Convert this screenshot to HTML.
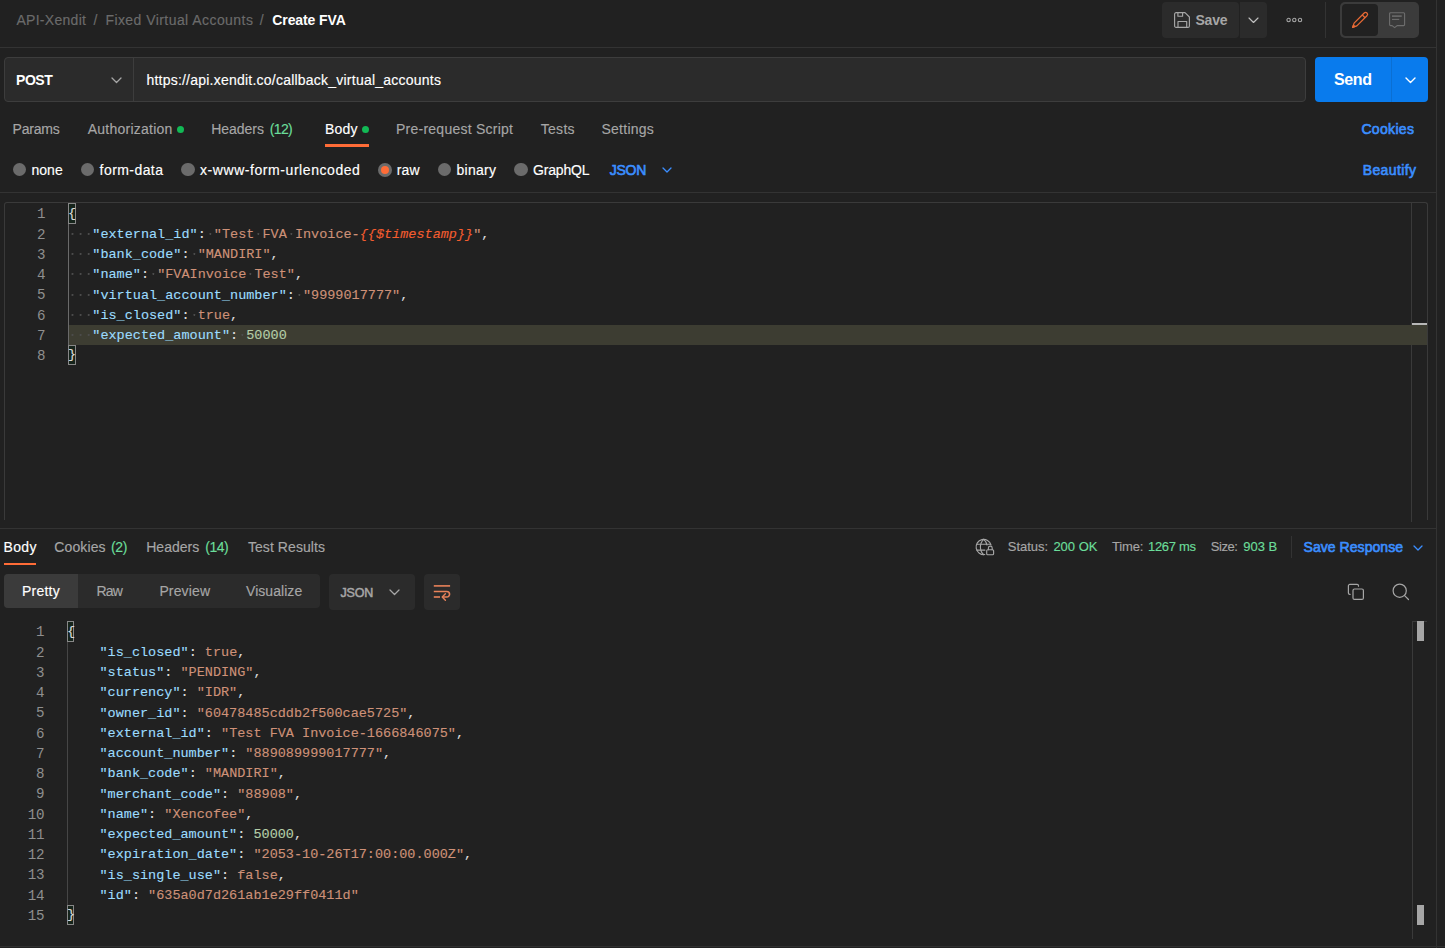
<!DOCTYPE html>
<html lang="en"><head><meta charset="utf-8"><title>Create FVA - Postman</title>
<style>
html,body{margin:0;padding:0;background:#212121;}
body{width:1445px;height:948px;position:relative;overflow:hidden;font-family:"Liberation Sans",sans-serif;}
.a{position:absolute;}
.t{position:absolute;white-space:pre;line-height:20px;height:20px;}
.ln{position:absolute;background:#333333;}
.code{position:absolute;white-space:pre;font-family:"Liberation Mono",monospace;font-size:13.5px;line-height:20.25px;height:20.25px;color:#dcdcdc;letter-spacing:0px;-webkit-text-stroke:0.12px currentColor;}
.code i{font-style:normal;}
.num{position:absolute;white-space:pre;font-family:"Liberation Mono",monospace;font-size:14.2px;line-height:20.25px;height:20.25px;color:#8f8f8f;text-align:right;width:40px;letter-spacing:-0.42px;}
i.k{color:#9cdcfe;} i.s{color:#ce9178;} i.n{color:#b5cea8;} i.b{color:#ce9178;} i.p{color:#dcdcdc;}
i.br{position:relative;top:-1px;}
i.v{color:#f45d2f;font-style:italic !important;} i.w{background:radial-gradient(circle at 4.4px 6.9px,#4c4c4c 0.7px,rgba(76,76,76,0) 1.3px) 0 0/8.1px 100% repeat-x;}
.radio{position:absolute;width:13.5px;height:13.5px;border-radius:50%;background:#6b6b6b;}
svg{position:absolute;overflow:visible;}
</style></head>
<body>
<div id="frame">
<div class="ln" style="left:0;top:47px;width:1436px;height:1px"></div>
<div class="ln" style="left:1436px;top:0;width:1px;height:948px"></div>
<div class="ln" style="left:0;top:192px;width:1436px;height:1px"></div>
<div class="ln" style="left:0;top:528px;width:1436px;height:1px"></div>
<div class="ln" style="left:0;top:946px;width:1445px;height:1px;background:#303030"></div>
</div>
<header id="header" aria-label="Request breadcrumb and actions">
<div class="a" style="left:1162px;top:2px;width:77px;height:36px;background:#2b2b2b;border-radius:4px"></div>
<div class="a" style="left:1240px;top:2px;width:27px;height:36px;background:#2b2b2b;border-radius:0 4px 4px 0"></div>
<svg style="left:1174px;top:12px" width="16" height="16" viewBox="0 0 16 16" fill="none" stroke="#a6a6a6" stroke-width="1.15" stroke-linejoin="round"><path d="M0.6 2.1a1.5 1.5 0 0 1 1.5-1.5h8.9l4.4 4.4v8.9a1.5 1.5 0 0 1-1.5 1.5H2.1a1.5 1.5 0 0 1-1.5-1.5z"/><path d="M3.9 0.6v3.6h4.7V0.6"/><path d="M4 15.4V9.5h8.7v5.9"/></svg>
<svg style="left:1248px;top:17px" width="11" height="7" viewBox="0 0 11 7" fill="none" stroke="#c0c0c0" stroke-width="1.15" stroke-linecap="round" stroke-linejoin="round"><path d="M1 1l4.5 4.5L10 1"/></svg>
<svg style="left:1286px;top:17px" width="17" height="6" viewBox="0 0 17 6" fill="none" stroke="#a6a6a6" stroke-width="1.1"><circle cx="2.6" cy="3" r="1.7"/><circle cx="8.3" cy="3" r="1.7"/><circle cx="14" cy="3" r="1.7"/></svg>
<div class="ln" style="left:1325px;top:2px;width:1px;height:36px"></div>
<div class="a" style="left:1340px;top:2px;width:79px;height:36px;background:#3b3b3b;border-radius:5px"></div>
<div class="a" style="left:1342px;top:4px;width:36px;height:32px;background:#212121;border-radius:4px"></div>
<svg style="left:1360.1px;top:19.8px" width="1" height="1" viewBox="0 0 1 1" fill="none" stroke="#e86a35" stroke-width="1.25" stroke-linejoin="round" stroke-linecap="round"><g transform="rotate(45)"><path d="M-1.95 -7.9a1.95 1.95 0 0 1 3.9 0V6.4L0 10.4L-1.95 6.4z"/><path d="M-1.95 -5.2h3.9" stroke-linecap="butt"/><path d="M-1 8.2L0 10.4L1 8.2z" fill="#e86a35"/></g></svg>
<svg style="left:1388.7px;top:12px" width="17" height="17" viewBox="0 0 17 17" fill="none" stroke="#6e6e6e" stroke-width="1.1" stroke-linejoin="round" stroke-linecap="butt"><path d="M1.6 0.7h13a1 1 0 0 1 1 1v10.9a1 1 0 0 1-1 1H8.1L5.6 15.6 3.1 13.6H1.6a1 1 0 0 1-1-1V1.7a1 1 0 0 1 1-1z"/><path d="M3 4.1h9.7" stroke-width="1.5"/><path d="M3 7.4h7.2"/></svg>
<div class="t" style="left:16.4px;top:10.15px;font-size:14px;color:#6b6b6b;-webkit-text-stroke:0.15px;letter-spacing:0.296px;">API-Xendit</div>
<div class="t" style="left:93.6px;top:10.15px;font-size:14px;color:#6b6b6b;-webkit-text-stroke:0.15px;">/</div>
<div class="t" style="left:105.4px;top:10.15px;font-size:14px;color:#6b6b6b;-webkit-text-stroke:0.15px;letter-spacing:0.44px;">Fixed Virtual Accounts</div>
<div class="t" style="left:259.8px;top:10.15px;font-size:14px;color:#6b6b6b;-webkit-text-stroke:0.15px;">/</div>
<div class="t" style="left:272.3px;top:10.15px;font-size:14px;color:#ffffff;font-weight:700;letter-spacing:-0.104px;">Create FVA</div>
<div class="t" style="left:1195.5px;top:10.15px;font-size:14px;color:#a6a6a6;font-weight:700;letter-spacing:-0.234px;">Save</div>
</header>
<section id="url-bar" aria-label="Request URL bar">
<div class="a" style="left:4px;top:57px;width:1300px;height:43px;background:#2b2b2b;border:1px solid #3d3d3d;border-radius:4px"></div>
<div class="a" style="left:133px;top:58px;width:1px;height:43px;background:#3d3d3d"></div>
<svg style="left:111px;top:77px" width="11" height="7" viewBox="0 0 11 7" fill="none" stroke="#a6a6a6" stroke-width="1.3" stroke-linecap="round" stroke-linejoin="round"><path d="M1 1l4.5 4.5L10 1"/></svg>
<div class="a" style="left:1315px;top:57px;width:113px;height:45px;background:#097bed;border-radius:4px"></div>
<div class="a" style="left:1391px;top:57px;width:1px;height:45px;background:#0a6fd3"></div>
<svg style="left:1405px;top:77px" width="11" height="7" viewBox="0 0 11 7" fill="none" stroke="#ffffff" stroke-width="1.4" stroke-linecap="round" stroke-linejoin="round"><path d="M1 1l4.5 4.5L10 1"/></svg>
<div class="t" style="left:16.1px;top:70.15px;font-size:14px;color:#ffffff;font-weight:700;letter-spacing:-0.475px;">POST</div>
<div class="t" style="left:146.4px;top:70.15px;font-size:14px;color:#ffffff;-webkit-text-stroke:0.15px;letter-spacing:0.227px;">https://api.xendit.co/callback_virtual_accounts</div>
<div class="t" style="left:1333.9px;top:69.96px;font-size:16px;color:#ffffff;font-weight:700;letter-spacing:-0.308px;">Send</div>
</section>
<nav id="request-tabs" aria-label="Request tabs">
<div class="a" style="left:177px;top:126px;width:7px;height:7px;border-radius:50%;background:#12b955"></div>
<div class="a" style="left:362px;top:126px;width:7px;height:7px;border-radius:50%;background:#12b955"></div>
<div class="a" style="left:325px;top:144.4px;width:44px;height:2.25px;background:#ff6c37"></div>
<div class="t" style="left:12.5px;top:119.15px;font-size:14px;color:#a6a6a6;-webkit-text-stroke:0.15px;letter-spacing:-0.187px;">Params</div>
<div class="t" style="left:87.7px;top:119.15px;font-size:14px;color:#a6a6a6;-webkit-text-stroke:0.15px;letter-spacing:0.248px;">Authorization</div>
<div class="t" style="left:211.3px;top:119.15px;font-size:14px;color:#a6a6a6;-webkit-text-stroke:0.15px;letter-spacing:-0.037px;">Headers</div>
<div class="t" style="left:269.8px;top:119.15px;font-size:14px;color:#6bdd9a;-webkit-text-stroke:0.15px;letter-spacing:-0.669px;">(12)</div>
<div class="t" style="left:325.0px;top:119.15px;font-size:14px;color:#ffffff;-webkit-text-stroke:0.15px;letter-spacing:0.159px;">Body</div>
<div class="t" style="left:396.0px;top:119.15px;font-size:14px;color:#a6a6a6;-webkit-text-stroke:0.15px;letter-spacing:0.245px;">Pre-request Script</div>
<div class="t" style="left:540.7px;top:119.15px;font-size:14px;color:#a6a6a6;-webkit-text-stroke:0.15px;letter-spacing:0.303px;">Tests</div>
<div class="t" style="left:601.5px;top:119.15px;font-size:14px;color:#a6a6a6;-webkit-text-stroke:0.15px;letter-spacing:0.244px;">Settings</div>
<div class="t" style="left:1361.4px;top:119.15px;font-size:14px;color:#3b8eff;-webkit-text-stroke:0.65px;letter-spacing:0.334px;">Cookies</div>
</nav>
<section id="body-type" aria-label="Body type selector">
<div class="radio" style="left:12.8px;top:162.6px"></div>
<div class="radio" style="left:80.8px;top:162.6px"></div>
<div class="radio" style="left:181.2px;top:162.6px"></div>
<div class="radio" style="left:437.8px;top:162.6px"></div>
<div class="radio" style="left:514.2px;top:162.6px"></div>
<div class="radio" style="left:377.85px;top:162.85px;width:14.3px;height:14.3px;background:#6b6b6b"></div>
<div class="a" style="left:380.7px;top:165.7px;width:8.6px;height:8.6px;border-radius:50%;background:#ff6c37"></div>
<svg style="left:662px;top:167px" width="10" height="6" viewBox="0 0 10 6" fill="none" stroke="#3b8eff" stroke-width="1.3" stroke-linecap="round" stroke-linejoin="round"><path d="M1 1l4 4 4-4"/></svg>
<div class="t" style="left:31.4px;top:160.15px;font-size:14px;color:#ffffff;-webkit-text-stroke:0.15px;letter-spacing:0.081px;">none</div>
<div class="t" style="left:99.6px;top:160.15px;font-size:14px;color:#ffffff;-webkit-text-stroke:0.15px;letter-spacing:0.435px;">form-data</div>
<div class="t" style="left:200.0px;top:160.15px;font-size:14px;color:#ffffff;-webkit-text-stroke:0.15px;letter-spacing:0.565px;">x-www-form-urlencoded</div>
<div class="t" style="left:396.7px;top:160.15px;font-size:14px;color:#ffffff;-webkit-text-stroke:0.15px;letter-spacing:0.219px;">raw</div>
<div class="t" style="left:456.5px;top:160.15px;font-size:14px;color:#ffffff;-webkit-text-stroke:0.15px;letter-spacing:0.272px;">binary</div>
<div class="t" style="left:533.0px;top:160.15px;font-size:14px;color:#ffffff;-webkit-text-stroke:0.15px;letter-spacing:-0.166px;">GraphQL</div>
<div class="t" style="left:609.7px;top:160.15px;font-size:14px;color:#3b8eff;-webkit-text-stroke:0.65px;letter-spacing:-0.215px;">JSON</div>
<div class="t" style="left:1362.7px;top:160.15px;font-size:14px;color:#3b8eff;-webkit-text-stroke:0.65px;letter-spacing:0.401px;">Beautify</div>
</section>
<section id="request-editor" aria-label="Request body editor">
<div class="a" style="left:4px;top:202px;width:1422px;height:330px;border:1px solid #3a3a3a;border-bottom:none;border-radius:3px 3px 0 0;clip-path:inset(0 0 13px 0)"></div>
<div class="a" style="left:1411px;top:203px;width:1px;height:319px;background:#3a3a3a"></div>
<div class="a" style="left:68px;top:325px;width:1359px;height:20px;background:#3d3d32"></div>
<div class="a" style="left:1412px;top:323px;width:15px;height:2px;background:#b8b8b8"></div>
<div class="a" style="left:68px;top:203px;width:1px;height:162px;background:#6a6a6a"></div>
<div class="a" style="left:68px;top:203.4px;width:8px;height:20.3px;border:1px solid #888;background:#16241b;box-sizing:border-box"></div>
<div class="a" style="left:68px;top:345.2px;width:8px;height:20px;border:1px solid #888;background:#16241b;box-sizing:border-box"></div>
<div class="num" style="left:5px;top:204.48px">1</div>
<div class="code" style="left:68.0px;top:204.68px"><i class="p br">{</i></div>
<div class="num" style="left:5px;top:224.73px">2</div>
<div class="code" style="left:68.0px;top:224.93px"><i class="w">   </i><i class="k">"external_id"</i><i class="p">:</i><i class="w"> </i><i class="s">"Test</i><i class="w"> </i><i class="s">FVA</i><i class="w"> </i><i class="s">Invoice-</i><i class="v">{{$timestamp}}</i><i class="s">"</i><i class="p">,</i></div>
<div class="num" style="left:5px;top:244.98px">3</div>
<div class="code" style="left:68.0px;top:245.18px"><i class="w">   </i><i class="k">"bank_code"</i><i class="p">:</i><i class="w"> </i><i class="s">"MANDIRI"</i><i class="p">,</i></div>
<div class="num" style="left:5px;top:265.23px">4</div>
<div class="code" style="left:68.0px;top:265.43px"><i class="w">   </i><i class="k">"name"</i><i class="p">:</i><i class="w"> </i><i class="s">"FVAInvoice</i><i class="w"> </i><i class="s">Test"</i><i class="p">,</i></div>
<div class="num" style="left:5px;top:285.48px">5</div>
<div class="code" style="left:68.0px;top:285.68px"><i class="w">   </i><i class="k">"virtual_account_number"</i><i class="p">:</i><i class="w"> </i><i class="s">"9999017777"</i><i class="p">,</i></div>
<div class="num" style="left:5px;top:305.73px">6</div>
<div class="code" style="left:68.0px;top:305.93px"><i class="w">   </i><i class="k">"is_closed"</i><i class="p">:</i><i class="w"> </i><i class="b">true</i><i class="p">,</i></div>
<div class="num" style="left:5px;top:325.98px">7</div>
<div class="code" style="left:68.0px;top:326.18px"><i class="w">   </i><i class="k">"expected_amount"</i><i class="p">:</i><i class="w"> </i><i class="n">50000</i></div>
<div class="num" style="left:5px;top:346.23px">8</div>
<div class="code" style="left:68.0px;top:346.43px"><i class="p br">}</i></div>
</section>
<nav id="response-tabs" aria-label="Response tabs and status">
<div class="a" style="left:4px;top:563px;width:32px;height:2px;background:#ff6c37"></div>
<svg style="left:975px;top:538px" width="20" height="18" viewBox="0 0 20 18" fill="none" stroke="#a6a6a6" stroke-width="1.15" stroke-linecap="round" stroke-linejoin="round"><path d="M9.8 16.5A7.6 7.6 0 1 1 16 6.9"/><path d="M1.9 6.2h13.6M1.9 12.1h8"/><path d="M8.7 1.4C6.4 3.4 5.4 6 5.4 9s1 5.6 3.3 7.6M8.7 1.4c1.8 1.5 2.8 3.4 3.2 5.6"/><rect x="11.7" y="11.7" width="6.9" height="5" rx="1"/><path d="M13.4 11.7V10a1.9 1.9 0 0 1 3.8 0v1.7"/></svg>
<div class="ln" style="left:1291px;top:536px;width:1px;height:22px"></div>
<svg style="left:1413px;top:545px" width="10" height="6" viewBox="0 0 10 6" fill="none" stroke="#3b8eff" stroke-width="1.3" stroke-linecap="round" stroke-linejoin="round"><path d="M1 1l4 4 4-4"/></svg>
<div class="t" style="left:3.5px;top:537.15px;font-size:14px;color:#ffffff;-webkit-text-stroke:0.15px;letter-spacing:0.326px;">Body</div>
<div class="t" style="left:54.3px;top:537.15px;font-size:14px;color:#a6a6a6;-webkit-text-stroke:0.15px;letter-spacing:0.118px;">Cookies</div>
<div class="t" style="left:111.0px;top:537.15px;font-size:14px;color:#6bdd9a;-webkit-text-stroke:0.15px;letter-spacing:-0.312px;">(2)</div>
<div class="t" style="left:146.2px;top:537.15px;font-size:14px;color:#a6a6a6;-webkit-text-stroke:0.15px;letter-spacing:0.03px;">Headers</div>
<div class="t" style="left:205.3px;top:537.15px;font-size:14px;color:#6bdd9a;-webkit-text-stroke:0.15px;letter-spacing:-0.502px;">(14)</div>
<div class="t" style="left:247.9px;top:537.15px;font-size:14px;color:#a6a6a6;-webkit-text-stroke:0.15px;letter-spacing:0.077px;">Test Results</div>
<div class="t" style="left:1007.8px;top:537.00px;font-size:13px;color:#a6a6a6;-webkit-text-stroke:0.15px;letter-spacing:-0.045px;">Status:</div>
<div class="t" style="left:1053.4px;top:537.00px;font-size:13px;color:#6bdd9a;-webkit-text-stroke:0.15px;">200 OK</div>
<div class="t" style="left:1112.0px;top:537.00px;font-size:13px;color:#a6a6a6;-webkit-text-stroke:0.15px;letter-spacing:-0.133px;">Time:</div>
<div class="t" style="left:1148.0px;top:537.00px;font-size:13px;color:#6bdd9a;-webkit-text-stroke:0.15px;letter-spacing:-0.329px;">1267 ms</div>
<div class="t" style="left:1210.8px;top:537.00px;font-size:13px;color:#a6a6a6;-webkit-text-stroke:0.15px;letter-spacing:-0.452px;">Size:</div>
<div class="t" style="left:1243.2px;top:537.00px;font-size:13px;color:#6bdd9a;-webkit-text-stroke:0.15px;">903 B</div>
<div class="t" style="left:1303.5px;top:537.15px;font-size:14px;color:#3b8eff;-webkit-text-stroke:0.65px;letter-spacing:0.055px;">Save Response</div>
</nav>
<section id="response-toolbar" aria-label="Response view toolbar">
<div class="a" style="left:4px;top:574px;width:316px;height:34px;background:#2b2b2b;border-radius:4px"></div>
<div class="a" style="left:4px;top:574px;width:74px;height:34px;background:#3b3b3b;border-radius:4px 0 0 4px"></div>
<div class="a" style="left:329px;top:574px;width:86px;height:36px;background:#2b2b2b;border-radius:4px"></div>
<svg style="left:389px;top:589px" width="11" height="7" viewBox="0 0 11 7" fill="none" stroke="#a6a6a6" stroke-width="1.3" stroke-linecap="round" stroke-linejoin="round"><path d="M1 1l4.5 4.5L10 1"/></svg>
<div class="a" style="left:424px;top:574px;width:36px;height:36px;background:#2b2b2b;border-radius:4px"></div>
<svg style="left:434px;top:584px" width="17" height="17" viewBox="0 0 17 17" fill="none" stroke="#e8825a" stroke-width="1.6" stroke-linecap="butt" stroke-linejoin="round"><path d="M-0.2 1.9h16.3"/><path d="M-0.2 7.5h13a2.75 2.75 0 0 1 0 5.5H9"/><path d="M11.4 9.8L8.2 13l3.2 3.2" stroke-linecap="round" stroke-width="1.4"/><path d="M-0.2 13h6.2"/></svg>
<svg style="left:1347px;top:583px" width="18" height="18" viewBox="0 0 18 18" fill="none" stroke="#a6a6a6" stroke-width="1.2" stroke-linejoin="round" stroke-linecap="round"><rect x="6" y="6" width="10.4" height="10.4" rx="1.5"/><path d="M3.1 11.4H2.8A1.4 1.4 0 0 1 1.4 10V2.8A1.4 1.4 0 0 1 2.8 1.4h7.3a1.4 1.4 0 0 1 1.4 1.4V3.2"/></svg>
<svg style="left:1392px;top:583px" width="18" height="18" viewBox="0 0 18 18" fill="none" stroke="#a6a6a6" stroke-width="1.2" stroke-linecap="round"><circle cx="7.7" cy="7.7" r="6.6"/><path d="M12.6 12.6l3.9 3.9"/></svg>
<div class="t" style="left:21.9px;top:581.15px;font-size:14px;color:#ffffff;-webkit-text-stroke:0.15px;letter-spacing:0.264px;">Pretty</div>
<div class="t" style="left:96.4px;top:581.15px;font-size:14px;color:#a6a6a6;-webkit-text-stroke:0.15px;letter-spacing:-0.708px;">Raw</div>
<div class="t" style="left:159.4px;top:581.15px;font-size:14px;color:#a6a6a6;-webkit-text-stroke:0.15px;letter-spacing:0.134px;">Preview</div>
<div class="t" style="left:246.0px;top:581.15px;font-size:14px;color:#a6a6a6;-webkit-text-stroke:0.15px;letter-spacing:0.052px;">Visualize</div>
<div class="t" style="left:340.4px;top:582.67px;font-size:12.5px;color:#a6a6a6;-webkit-text-stroke:0.5px;letter-spacing:-0.115px;">JSON</div>
</section>
<main id="response-body" aria-label="Response body">
<div class="a" style="left:67px;top:641px;width:1px;height:264px;background:#464646"></div>
<div class="a" style="left:67px;top:621px;width:7px;height:21px;border:1px solid #888;background:#16241b;box-sizing:border-box"></div>
<div class="a" style="left:67px;top:905px;width:7px;height:20px;border:1px solid #888;background:#16241b;box-sizing:border-box"></div>
<div class="a" style="left:1412px;top:621px;width:1px;height:318px;background:#3a3a3a"></div>
<div class="a" style="left:1412px;top:621px;width:15px;height:1px;background:#3a3a3a"></div>
<div class="a" style="left:1417px;top:621px;width:7px;height:20px;background:#a6a6a6"></div>
<div class="a" style="left:1417px;top:905px;width:7px;height:20px;background:#a6a6a6"></div>
<div class="num" style="left:4px;top:622.48px">1</div>
<div class="code" style="left:67.1px;top:622.68px"><i class="p br">{</i></div>
<div class="num" style="left:4px;top:642.73px">2</div>
<div class="code" style="left:67.1px;top:642.93px">    <i class="k">"is_closed"</i><i class="p">: </i><i class="b">true</i><i class="p">,</i></div>
<div class="num" style="left:4px;top:662.98px">3</div>
<div class="code" style="left:67.1px;top:663.18px">    <i class="k">"status"</i><i class="p">: </i><i class="s">"PENDING"</i><i class="p">,</i></div>
<div class="num" style="left:4px;top:683.23px">4</div>
<div class="code" style="left:67.1px;top:683.43px">    <i class="k">"currency"</i><i class="p">: </i><i class="s">"IDR"</i><i class="p">,</i></div>
<div class="num" style="left:4px;top:703.48px">5</div>
<div class="code" style="left:67.1px;top:703.68px">    <i class="k">"owner_id"</i><i class="p">: </i><i class="s">"60478485cddb2f500cae5725"</i><i class="p">,</i></div>
<div class="num" style="left:4px;top:723.73px">6</div>
<div class="code" style="left:67.1px;top:723.93px">    <i class="k">"external_id"</i><i class="p">: </i><i class="s">"Test FVA Invoice-1666846075"</i><i class="p">,</i></div>
<div class="num" style="left:4px;top:743.98px">7</div>
<div class="code" style="left:67.1px;top:744.18px">    <i class="k">"account_number"</i><i class="p">: </i><i class="s">"889089999017777"</i><i class="p">,</i></div>
<div class="num" style="left:4px;top:764.23px">8</div>
<div class="code" style="left:67.1px;top:764.43px">    <i class="k">"bank_code"</i><i class="p">: </i><i class="s">"MANDIRI"</i><i class="p">,</i></div>
<div class="num" style="left:4px;top:784.48px">9</div>
<div class="code" style="left:67.1px;top:784.68px">    <i class="k">"merchant_code"</i><i class="p">: </i><i class="s">"88908"</i><i class="p">,</i></div>
<div class="num" style="left:4px;top:804.73px">10</div>
<div class="code" style="left:67.1px;top:804.93px">    <i class="k">"name"</i><i class="p">: </i><i class="s">"Xencofee"</i><i class="p">,</i></div>
<div class="num" style="left:4px;top:824.98px">11</div>
<div class="code" style="left:67.1px;top:825.18px">    <i class="k">"expected_amount"</i><i class="p">: </i><i class="n">50000</i><i class="p">,</i></div>
<div class="num" style="left:4px;top:845.23px">12</div>
<div class="code" style="left:67.1px;top:845.43px">    <i class="k">"expiration_date"</i><i class="p">: </i><i class="s">"2053-10-26T17:00:00.000Z"</i><i class="p">,</i></div>
<div class="num" style="left:4px;top:865.48px">13</div>
<div class="code" style="left:67.1px;top:865.68px">    <i class="k">"is_single_use"</i><i class="p">: </i><i class="b">false</i><i class="p">,</i></div>
<div class="num" style="left:4px;top:885.73px">14</div>
<div class="code" style="left:67.1px;top:885.93px">    <i class="k">"id"</i><i class="p">: </i><i class="s">"635a0d7d261ab1e29ff0411d"</i></div>
<div class="num" style="left:4px;top:905.98px">15</div>
<div class="code" style="left:67.1px;top:906.18px"><i class="p br">}</i></div>
</main>
</body></html>
